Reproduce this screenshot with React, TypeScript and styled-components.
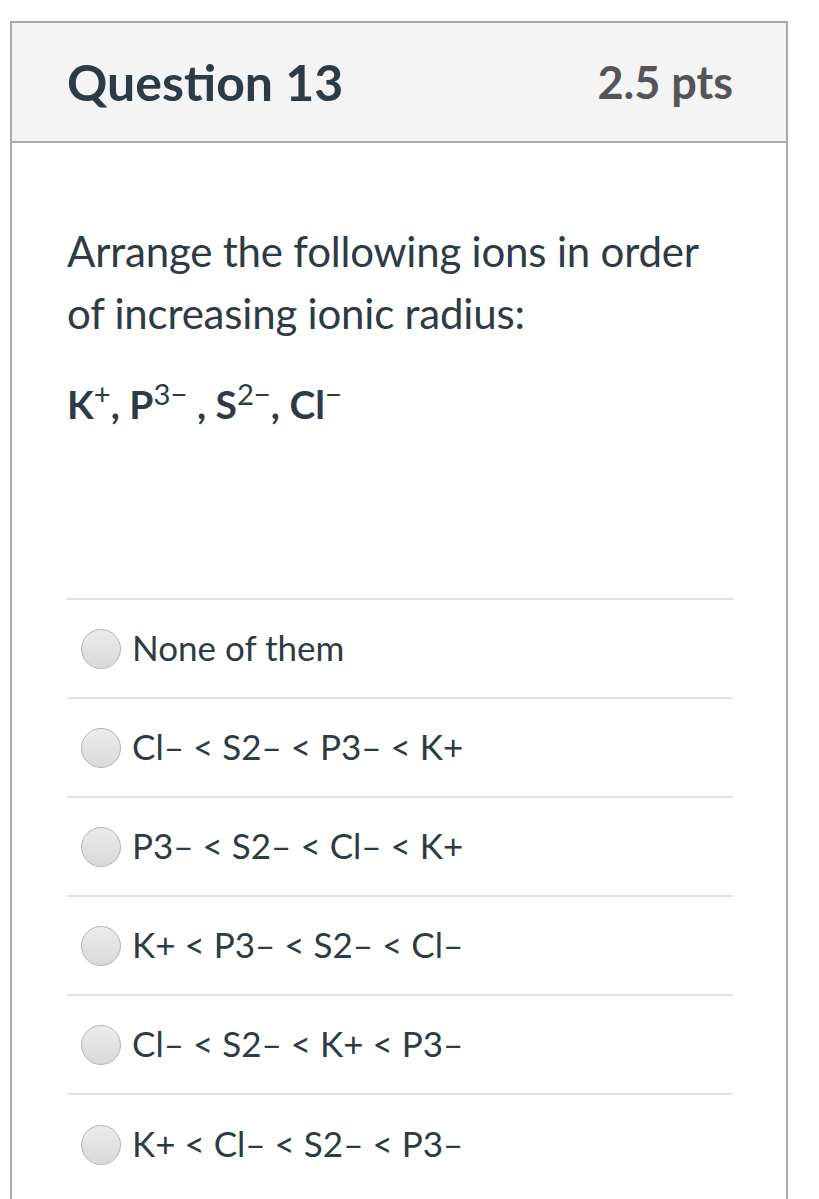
import styled, { createGlobalStyle } from 'styled-components'

const GlobalStyle = createGlobalStyle`
    body {
        margin: 0;
        background: #fff;
        font-family: Lato, "Liberation Sans", sans-serif;
        color: #2d3b45;
    }
`

const Page = styled.div`
    padding: 21px 31px 0 10px;
`

const Card = styled.div`
    border: 2px solid #aaaaaa;
    border-bottom: none;
    height: 1200px;
`

const Header = styled.div`
    background: #f4f4f4;
    border-bottom: 2px solid #aaaaaa;
    height: 118px;
    padding: 0 53px 0 55px;
    display: flex;
    align-items: center;
    justify-content: space-between;
`

const Title = styled.h2`
    margin: 0;
    font-size: 50px;
    font-weight: 700;
    color: #2d3b45;
`

const Points = styled.span`
    font-size: 45px;
    font-weight: 700;
    color: #555555;
`

const Body = styled.div`
    padding: 77px 53px 0 55px;
`

const Prompt = styled.p`
    margin: 0;
    font-size: 42px;
    line-height: 62px;
    letter-spacing: -0.2px;
    color: #2d3b45;
`

const Ions = styled.p`
    margin: 37px 0 0;
    font-size: 39px;
    font-weight: 700;
    color: #2d3b45;

    sup {
        font-size: 0.75em;
        font-weight: 400;
        line-height: 0;
    }
`

const Answers = styled.div`
    margin-top: 171px;
    border-top: 2px solid #e0e0e0;
`

const Answer = styled.label`
    display: flex;
    align-items: center;
    gap: 11px;
    height: 99px;
    padding: 0 0 3px 14px;
    box-sizing: border-box;
    border-bottom: 2px solid #e0e0e0;
    font-size: 35px;
    color: #2d3b45;

    &:last-child {
        border-bottom: none;
    }
`

const Radio = styled.span`
    width: 38px;
    height: 38px;
    margin-top: 3px;
    border-radius: 50%;
    border: 1px solid #b4b4b4;
    background: linear-gradient(#ececec, #d9d9d9);
    flex-shrink: 0;
`

const options = [
    'None of them',
    'Cl\u2013 < S2\u2013 < P3\u2013 < K+',
    'P3\u2013 < S2\u2013 < Cl\u2013 < K+',
    'K+ < P3\u2013 < S2\u2013 < Cl\u2013',
    'Cl\u2013 < S2\u2013 < K+ < P3\u2013',
    'K+ < Cl\u2013 < S2\u2013 < P3\u2013',
]

export default function App() {
    return (
        <>
            <GlobalStyle />
            <Page>
                <Card>
                    <Header>
                        <Title>Question 13</Title>
                        <Points>2.5 pts</Points>
                    </Header>
                    <Body>
                        <Prompt>Arrange the following ions in order of increasing ionic radius:</Prompt>
                        <Ions>
                            K<sup>+</sup>, P<sup>3&minus;</sup> , S<sup>2&minus;</sup>, Cl<sup>&minus;</sup>
                        </Ions>
                        <Answers>
                            {options.map((text) => (
                                <Answer key={text}>
                                    <Radio />
                                    {text}
                                </Answer>
                            ))}
                        </Answers>
                    </Body>
                </Card>
            </Page>
        </>
    )
}
